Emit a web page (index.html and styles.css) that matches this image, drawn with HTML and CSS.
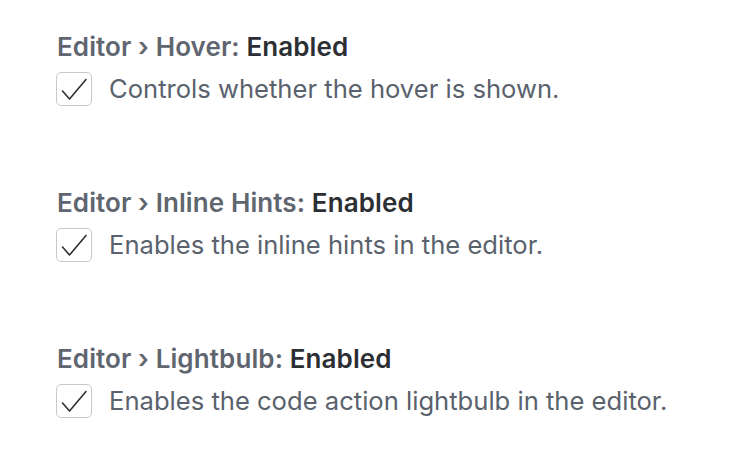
FILE: index.html
```html
<!DOCTYPE html>
<html>
<head>
<meta charset="utf-8">
<link rel="stylesheet" href="styles.css">
</head>
<body>
<div class="settings">
  <div class="setting">
    <div class="title">Editor › Hover: <strong>Enabled</strong></div>
    <div class="row">
      <span class="checkbox"><svg viewBox="0 0 34 32"><path d="M5.5 18 L12.5 26 L29 6.5" fill="none" stroke="#2c3034" stroke-width="1.6" stroke-linecap="round" stroke-linejoin="round"/></svg></span>
      <span class="desc">Controls whether the hover is shown.</span>
    </div>
  </div>
  <div class="setting">
    <div class="title">Editor › Inline Hints: <strong>Enabled</strong></div>
    <div class="row">
      <span class="checkbox"><svg viewBox="0 0 34 32"><path d="M5.5 18 L12.5 26 L29 6.5" fill="none" stroke="#2c3034" stroke-width="1.6" stroke-linecap="round" stroke-linejoin="round"/></svg></span>
      <span class="desc">Enables the inline hints in the editor.</span>
    </div>
  </div>
  <div class="setting">
    <div class="title">Editor › Lightbulb: <strong>Enabled</strong></div>
    <div class="row">
      <span class="checkbox"><svg viewBox="0 0 34 32"><path d="M5.5 18 L12.5 26 L29 6.5" fill="none" stroke="#2c3034" stroke-width="1.6" stroke-linecap="round" stroke-linejoin="round"/></svg></span>
      <span class="desc">Enables the code action lightbulb in the editor.</span>
    </div>
  </div>
</div>
</body>
</html>
```
FILE: styles.css
```css
html, body {
  margin: 0;
  padding: 0;
  background: #ffffff;
}
body {
  font-family: Inter, "Noto Sans", sans-serif;
  width: 754px;
  height: 466px;
  overflow: hidden;
}
.settings {
  padding: 31px 0 0 57px;
  display: flex;
  flex-direction: column;
  gap: 80px;
}
.setting {
  display: flex;
  flex-direction: column;
  gap: 8px;
}
.title {
  font-size: 26px;
  line-height: 32px;
  font-weight: 600;
  color: #60666f;
  letter-spacing: 0.1px;
}
.title strong {
  font-weight: 600;
  color: #2b2f33;
}
.row {
  display: flex;
  align-items: center;
  gap: 17px;
}
.checkbox {
  width: 34px;
  height: 32px;
  border: 1px solid #c6cad0;
  border-radius: 5px;
  display: flex;
  margin-left: -1px;
}
.checkbox svg {
  width: 34px;
  height: 32px;
}
.desc {
  font-size: 25.6px;
  line-height: 36px;
  color: #5a626d;
}
```
